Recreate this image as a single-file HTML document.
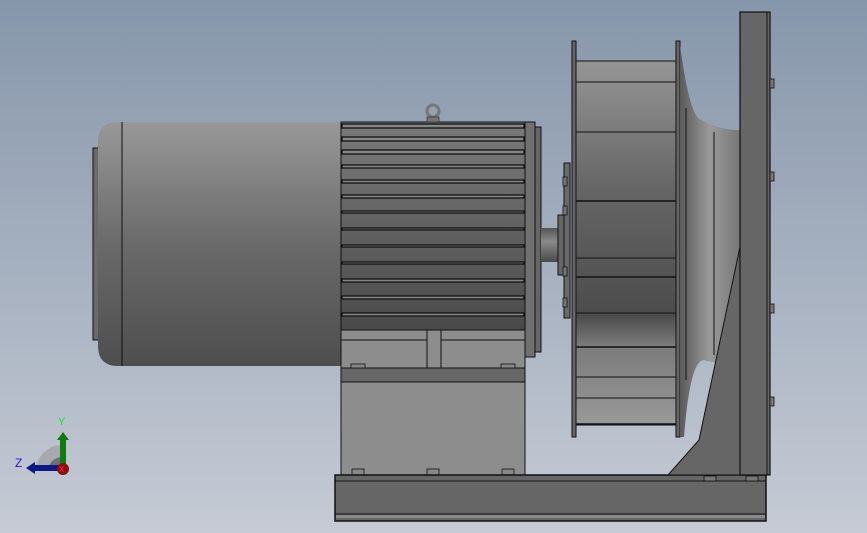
<!DOCTYPE html>
<html><head><style>html,body{margin:0;padding:0;width:867px;height:533px;overflow:hidden}</style></head>
<body>
<svg width="867" height="533" viewBox="0 0 867 533" xmlns="http://www.w3.org/2000/svg" font-family="Liberation Sans, sans-serif">
<defs>
<linearGradient id="bg" x1="0" y1="0" x2="0" y2="1"><stop offset="0" stop-color="#8696aa"/><stop offset="1" stop-color="#c6cbd5"/></linearGradient>
<linearGradient id="mot" x1="0" y1="0" x2="0" y2="1"><stop offset="0" stop-color="#989898"/><stop offset="0.5" stop-color="#6a6a6a"/><stop offset="1" stop-color="#4e4e4e"/></linearGradient>
<linearGradient id="fin" x1="0" y1="0" x2="0" y2="1"><stop offset="0" stop-color="#7a7a7a"/><stop offset="1" stop-color="#4a4a4a"/></linearGradient>
<linearGradient id="drum" x1="0" y1="0" x2="0" y2="1"><stop offset="0" stop-color="#959595"/><stop offset="0.35" stop-color="#666"/><stop offset="0.7" stop-color="#4c4c4c"/><stop offset="0.78" stop-color="#7a7a7a"/><stop offset="1" stop-color="#999"/></linearGradient>
<linearGradient id="cone" x1="0" y1="0" x2="1" y2="0"><stop offset="0" stop-color="#5a5a5a"/><stop offset="0.5" stop-color="#9a9a9a"/><stop offset="1" stop-color="#777"/></linearGradient>
<linearGradient id="shaft" x1="0" y1="0" x2="0" y2="1"><stop offset="0" stop-color="#555"/><stop offset="0.4" stop-color="#8a8a8a"/><stop offset="1" stop-color="#4a4a4a"/></linearGradient>
</defs>
<rect width="867" height="533" fill="url(#bg)"/>
<rect x="93" y="148" width="8" height="192" fill="#6a6a6a" stroke="#111" stroke-width="1"/>
<path d="M118 122 H341 V366 H118 Q98 366 98 346 V142 Q98 122 118 122 Z" fill="url(#mot)"/>
<line x1="122" y1="122" x2="122" y2="366" stroke="#111"/>
<rect x="341" y="122" width="184" height="208" fill="url(#fin)" stroke="#111"/>
<g stroke="#111" stroke-width="1.3" fill="#868686">
<rect x="342" y="124" width="182" height="4"/>
<rect x="342" y="137" width="182" height="4"/>
<rect x="342" y="150" width="182" height="4"/>
<rect x="342" y="165" width="182" height="3"/>
<rect x="342" y="180" width="182" height="3"/>
<rect x="342" y="195" width="182" height="3"/>
<rect x="342" y="211" width="182" height="2"/>
<rect x="342" y="228" width="182" height="2"/>
<rect x="342" y="245" width="182" height="2"/>
<rect x="342" y="262" width="182" height="2"/>
<rect x="342" y="279" width="182" height="3"/>
<rect x="342" y="296" width="182" height="3"/>
<rect x="342" y="313" width="182" height="3"/>
</g>
<circle cx="433" cy="111" r="6" fill="none" stroke="#777" stroke-width="3"/>
<rect x="427" y="117" width="12" height="5" fill="#777" stroke="#222" stroke-width="0.6"/>
<rect x="525" y="122" width="10" height="235" fill="#707070" stroke="#111"/>
<rect x="535" y="127" width="6" height="225" fill="#666" stroke="#111"/>
<rect x="541" y="228" width="18" height="34" fill="url(#shaft)"/>
<rect x="558" y="215" width="6" height="60" fill="#666" stroke="#111"/>
<rect x="564" y="163" width="6" height="155" fill="#6a6a6a" stroke="#111"/>
<g fill="#777" stroke="#111" stroke-width="0.8">
<rect x="563" y="177" width="4" height="9"/><rect x="563" y="206" width="4" height="9"/><rect x="563" y="267" width="4" height="9"/><rect x="563" y="298" width="4" height="9"/>
</g>
<rect x="341" y="330" width="184" height="145" fill="#8d8d8d" stroke="#111"/>
<line x1="341" y1="340" x2="525" y2="340" stroke="#111"/>
<rect x="427" y="330" width="14" height="38" fill="#8d8d8d" stroke="#111"/>
<rect x="341" y="368" width="184" height="14" fill="#666" stroke="#111"/>
<g fill="#888" stroke="#111" stroke-width="0.8">
<rect x="351" y="364" width="14" height="4"/><rect x="501" y="364" width="14" height="4"/>
<rect x="352" y="469" width="12" height="8"/><rect x="427" y="469" width="12" height="8"/><rect x="502" y="469" width="12" height="8"/>
</g>
<rect x="335" y="475" width="431" height="46" fill="#666" stroke="#111" stroke-width="1.5"/>
<line x1="335" y1="481" x2="766" y2="481" stroke="#111"/>
<line x1="335" y1="514" x2="766" y2="514" stroke="#111"/>
<rect x="336" y="515" width="429" height="3" fill="#8a8a8a"/>
<rect x="576" y="61" width="100" height="364" fill="url(#drum)" stroke="#111"/>
<g stroke="#111" stroke-width="1">
<line x1="576" y1="82" x2="676" y2="82"/><line x1="576" y1="132" x2="676" y2="132"/>
<line x1="576" y1="201" x2="676" y2="201" stroke-width="1.6"/><line x1="576" y1="258" x2="676" y2="258"/>
<line x1="576" y1="277" x2="676" y2="277" stroke-width="1.6"/><line x1="576" y1="313" x2="676" y2="313"/>
<line x1="576" y1="347" x2="676" y2="347" stroke-width="1.6"/><line x1="576" y1="377" x2="676" y2="377"/>
<line x1="576" y1="398" x2="676" y2="398"/><line x1="576" y1="424" x2="676" y2="424" stroke-width="1.6"/>
</g>
<rect x="572" y="41" width="4" height="396" fill="#666" stroke="#111"/>
<rect x="676" y="41" width="4" height="396" fill="#666" stroke="#111"/>
<path d="M680 45 Q690 120 702 120 Q718 130 740 130 V360 Q718 365 704 360 Q690 360 684 437 H680 Z" fill="url(#cone)"/>
<line x1="686" y1="108" x2="686" y2="380" stroke="#111"/>
<line x1="714" y1="132" x2="714" y2="355" stroke="#111"/>
<path d="M740 247 L699 440 L668 475 H766 V247 Z" fill="#666" stroke="#111"/>
<rect x="740" y="12" width="30" height="463" fill="#666" stroke="#111" stroke-width="1.2"/>
<line x1="767" y1="12" x2="767" y2="475" stroke="#111"/>
<g fill="#777" stroke="#111" stroke-width="0.8">
<rect x="770" y="79" width="4" height="9"/><rect x="770" y="172" width="4" height="9"/><rect x="770" y="304" width="4" height="9"/><rect x="770" y="397" width="4" height="9"/>
<rect x="704" y="476" width="12" height="5"/><rect x="746" y="476" width="12" height="5"/>
</g>
<path d="M36 471 A26 26 0 0 1 62 445 V471 Z" fill="#a6a9ae"/>
<path d="M48 471 A14 14 0 0 1 62 457 V471 Z" fill="#6e7076"/>
<rect x="60" y="438" width="6" height="31" fill="#0f7a10"/>
<path d="M57 440 L63 432 L69 440 Z" fill="#0f7a10"/>
<rect x="33" y="465" width="28" height="6" fill="#0a1a80"/>
<path d="M35 462 L26 468 L35 474 Z" fill="#0a1a80"/>
<circle cx="63" cy="469" r="6" fill="#8a0f0f"/>
<text x="58" y="425" font-size="11" fill="#1aeb1a">Y</text>
<text x="15" y="467" font-size="12" fill="#1a1ae8">Z</text>
<text x="59" y="472" font-size="8" fill="#ff3030">X</text>
</svg>
</body></html>
